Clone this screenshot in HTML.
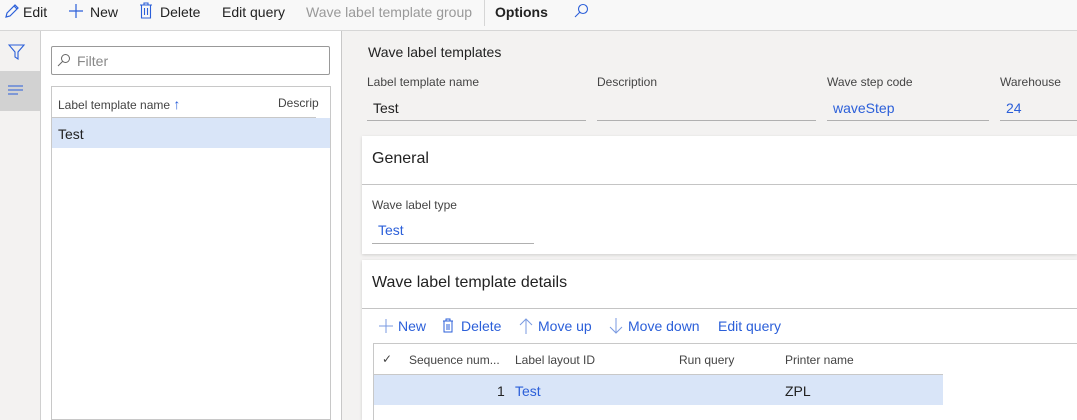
<!DOCTYPE html>
<html><head><style>
*{box-sizing:border-box;margin:0;padding:0}
body{width:1077px;height:420px;overflow:hidden;font-family:"Liberation Sans",sans-serif;font-size:13px;color:#222;background:#f3f2f1;position:relative}
.a{position:absolute;white-space:nowrap}
.blue{color:#2b5fd9}
.lbl{font-size:12px;color:#444}
.line{position:absolute;height:1px;background:#b0b0b0}
</style></head><body>
<div class="a" style="left:0;top:0;width:1077px;height:31px;background:#f8f8f8;border-bottom:1px solid #d6d6d6"></div>
<svg class="a" style="left:4px;top:3px" width="16" height="16" viewBox="0 0 16 16"><path d="M2 14l1-4 8-8 3 3-8 8z M10 3l3 3" fill="none" stroke="#2b5fd9" stroke-width="1.2"/></svg>
<div class="a" style="left:23px;top:4px;font-size:14px">Edit</div>
<svg class="a" style="left:68px;top:3px" width="16" height="16"><path d="M8 1v14M1 8h14" stroke="#2b5fd9" stroke-width="1.2"/></svg>
<div class="a" style="left:90px;top:4px;font-size:14px">New</div>
<svg class="a" style="left:139px;top:2px" width="14" height="17"><path d="M1 3h12M5 3V1h4v2M2.5 3v13h9V3M5.5 6v7M8.5 6v7" fill="none" stroke="#2b5fd9" stroke-width="1.1"/></svg>
<div class="a" style="left:160px;top:4px;font-size:14px">Delete</div>
<div class="a" style="left:222px;top:4px;font-size:14px">Edit query</div>
<div class="a" style="left:306px;top:4px;font-size:14px;color:#999">Wave label template group</div>
<div class="a" style="left:484px;top:0;width:1px;height:26px;background:#d6d6d6"></div>
<div class="a" style="left:495px;top:4px;font-size:14px;font-weight:bold;color:#222">Options</div>
<svg class="a" style="left:573px;top:3px" width="16" height="16"><circle cx="10" cy="6" r="4.5" fill="none" stroke="#2b5fd9" stroke-width="1.1"/><path d="M7 9l-5 5" stroke="#2b5fd9" stroke-width="1.1"/></svg>

<div class="a" style="left:0;top:31px;width:41px;height:389px;background:#f3f2f1;border-right:1px solid #d0d0d0"></div>
<svg class="a" style="left:8px;top:43px" width="18" height="18"><path d="M1 2h15l-6 7v7l-3-2V9z" fill="none" stroke="#2b5fd9" stroke-width="1.1"/></svg>
<div class="a" style="left:0;top:71px;width:40px;height:40px;background:#d2d2d2"></div>
<svg class="a" style="left:7px;top:83px" width="18" height="14"><path d="M1 3h15M1 7h15M1 11h10" stroke="#2b5fd9" stroke-width="1.1"/></svg>

<div class="a" style="left:41px;top:31px;width:301px;height:389px;background:#fff;border-right:1px solid #c8c8c8"></div>
<div class="a" style="left:51px;top:46px;width:279px;height:29px;border:1px solid #999;border-radius:2px;background:#fff"></div>
<svg class="a" style="left:57px;top:53px" width="14" height="14"><circle cx="8.5" cy="5.5" r="4" fill="none" stroke="#666" stroke-width="1"/><path d="M6 8l-5 5" stroke="#666"/></svg>
<div class="a" style="left:77px;top:53px;font-size:14px;color:#888">Filter</div>
<div class="a" style="left:51px;top:86px;width:280px;height:334px;border:1px solid #c8c8c8"></div>
<div class="a lbl" style="left:58px;top:96px">Label template name <span class="blue" style="font-size:14px">↑</span></div>
<div class="a lbl" style="left:278px;top:96px">Descrip</div>
<div class="line" style="left:52px;top:117px;width:264px;background:#c8c8c8"></div>
<div class="a" style="left:52px;top:118px;width:278px;height:30px;background:#d9e5f8"></div>
<div class="a" style="left:58px;top:126px;font-size:14px">Test</div>

<div class="a" style="left:368px;top:44px;font-size:14px">Wave label templates</div>
<div class="a lbl" style="left:367px;top:75px">Label template name</div>
<div class="a lbl" style="left:597px;top:75px">Description</div>
<div class="a lbl" style="left:827px;top:75px">Wave step code</div>
<div class="a lbl" style="left:1000px;top:75px">Warehouse</div>
<div class="a" style="left:373px;top:100px;font-size:14px">Test</div>
<div class="a blue" style="left:833px;top:100px;font-size:14px">waveStep</div>
<div class="a blue" style="left:1006px;top:100px;font-size:14px">24</div>
<div class="line" style="left:367px;top:120px;width:219px"></div>
<div class="line" style="left:597px;top:120px;width:219px"></div>
<div class="line" style="left:827px;top:120px;width:162px"></div>
<div class="line" style="left:1000px;top:120px;width:77px"></div>

<div class="a" style="left:362px;top:136px;width:715px;height:118px;background:#fff;box-shadow:0 1px 3px rgba(0,0,0,.15)"></div>
<div class="a" style="left:372px;top:150px;font-size:16px">General</div>
<div class="line" style="left:362px;top:184px;width:715px;background:#c4c4c4"></div>
<div class="a lbl" style="left:372px;top:198px">Wave label type</div>
<div class="a blue" style="left:378px;top:222px;font-size:14px">Test</div>
<div class="line" style="left:372px;top:243px;width:162px"></div>

<div class="a" style="left:362px;top:260px;width:715px;height:160px;background:#fff;box-shadow:0 1px 3px rgba(0,0,0,.15)"></div>
<div class="a" style="left:372px;top:274px;font-size:16px">Wave label template details</div>
<div class="line" style="left:362px;top:308px;width:715px;background:#c4c4c4"></div>
<svg class="a" style="left:379px;top:319px" width="14" height="14"><path d="M7 0v14M0 7h14" stroke="#7a9ae0" stroke-width="1"/></svg>
<div class="a blue" style="left:398px;top:318px;font-size:14px">New</div>
<svg class="a" style="left:442px;top:318px" width="12" height="15"><path d="M1 3h10M4 3V1h4v2M2 3v11h8V3M5 6v6M7 6v6" fill="none" stroke="#2b5fd9" stroke-width="1"/></svg>
<div class="a blue" style="left:461px;top:318px;font-size:14px">Delete</div>
<svg class="a" style="left:519px;top:318px" width="14" height="16"><path d="M7 1v15M1 7l6-6 6 6" fill="none" stroke="#7a9ae0" stroke-width="1"/></svg>
<div class="a blue" style="left:538px;top:318px;font-size:14px">Move up</div>
<svg class="a" style="left:609px;top:318px" width="14" height="16"><path d="M7 0v15M1 9l6 6 6-6" fill="none" stroke="#7a9ae0" stroke-width="1"/></svg>
<div class="a blue" style="left:628px;top:318px;font-size:14px">Move down</div>
<div class="a blue" style="left:718px;top:318px;font-size:14px">Edit query</div>
<div class="a" style="left:373px;top:343px;width:704px;height:77px;border-left:1px solid #c8c8c8;border-top:1px solid #c8c8c8"></div>
<div class="a lbl" style="left:382px;top:352px">✓</div>
<div class="a lbl" style="left:409px;top:353px">Sequence num...</div>
<div class="a lbl" style="left:515px;top:353px">Label layout ID</div>
<div class="a lbl" style="left:679px;top:353px">Run query</div>
<div class="a lbl" style="left:785px;top:353px">Printer name</div>
<div class="line" style="left:374px;top:374px;width:569px;background:#c8c8c8"></div>
<div class="a" style="left:374px;top:375px;width:569px;height:30px;background:#d9e5f8"></div>
<div class="a" style="left:497px;top:383px;font-size:14px">1</div>
<div class="a blue" style="left:515px;top:383px;font-size:14px">Test</div>
<div class="a" style="left:785px;top:383px;font-size:14px">ZPL</div>
</body></html>
